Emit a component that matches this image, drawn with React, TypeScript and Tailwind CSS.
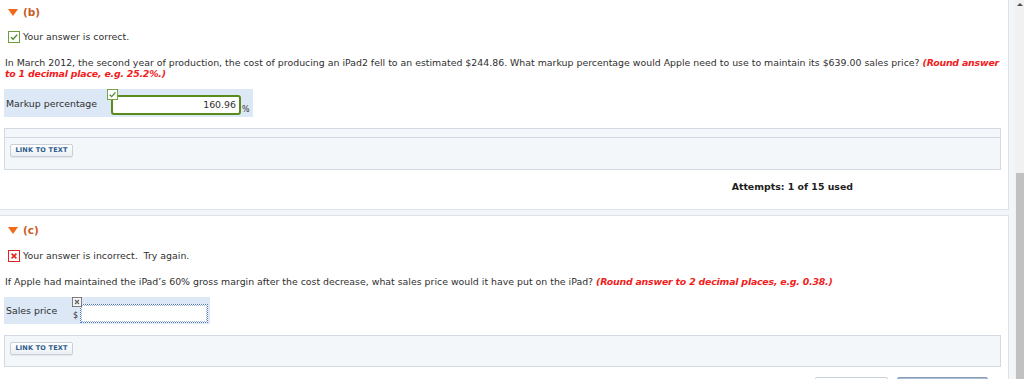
import React from 'react';

const font = { fontFamily: '"DejaVu Sans", Verdana, sans-serif' };

function Triangle() {
  return <span className="inline-block w-0 h-0 border-l-[5px] border-r-[5px] border-t-[7px] border-l-transparent border-r-transparent border-t-[#f06a18]" />;
}

function CheckIcon({ size = 12 }: { size?: number }) {
  return (
    <svg width={size} height={size} viewBox="0 0 12 12">
      <rect x="0.5" y="0.5" width="11" height="11" fill="#fff" stroke="#6f9c3c" />
      <path d="M3 6.2 L5.1 8.3 L9.2 3.6" fill="none" stroke="#4f8a2a" strokeWidth="1.4" />
    </svg>
  );
}

function XIcon({ size = 12, color = '#e0241f', bg = '#fff' }: { size?: number; color?: string; bg?: string }) {
  return (
    <svg width={size} height={size} viewBox="0 0 12 12">
      <rect x="0.5" y="0.5" width="11" height="11" fill={bg} stroke={color} />
      <path d="M3.6 3.6 L8.4 8.4 M8.4 3.6 L3.6 8.4" stroke={color} strokeWidth="1.6" />
    </svg>
  );
}

function LinkButton() {
  return (
    <button className="flex items-center justify-center h-[13px] w-[63px] rounded-[2px] border border-[#c9d0d9] bg-gradient-to-b from-white to-[#eceff3] text-[6.5px] font-bold tracking-[0.2px] text-[#2d5c8e] leading-none shadow-[0_1px_0_#e3e7ec]">
      LINK TO TEXT
    </button>
  );
}

function Header({ label }: { label: string }) {
  return (
    <div className="flex items-center h-[14px] pl-[4px] gap-[5px]">
      <Triangle />
      <span className="text-[10.5px] font-bold text-[#c85d1f] leading-none">{label}</span>
    </div>
  );
}

export default function App() {
  return (
    <div className="w-[1024px] h-[379px] overflow-hidden flex bg-[#f3f6f9] text-[#2f2f2f]" style={font}>
      <div className="w-[1015px] flex flex-col">
        {/* part b */}
        <div className="shrink-0 w-[1009px] h-[210px] bg-white border-r border-b border-[#dde3ea] px-[4px] pt-[5px]">
          <Header label="(b)" />
          <div className="mt-[12px] flex items-center gap-[3px] pl-[4px] h-[12px]">
            <CheckIcon />
            <span className="text-[9.4px] leading-none">Your answer is correct.</span>
          </div>
          <p className="mt-[14px] ml-px text-[9.4px] leading-[11px] whitespace-nowrap">
            In March 2012, the second year of production, the cost of producing an iPad2 fell to an estimated $244.86. What markup percentage would Apple need to use to maintain its $639.00 sales price?{' '}
            <span className="font-bold italic text-[#f21c1c] tracking-[-0.2px]">
              (Round answer
              <br />
              to 1 decimal place, e.g. 25.2%.)
            </span>
          </p>
          <div className="mt-[10px] w-[249px] h-[28px] bg-[#dde8f7] flex">
            <span className="w-[107px] pl-[2px] pt-[9px] text-[9.4px] leading-[11px]">Markup percentage</span>
            <div className="relative pt-[6px]">
              <div className="absolute left-[-4px] top-0">
                <CheckIcon size={11} />
              </div>
              <div className="w-[130px] h-[20px] rounded-[3px] border-2 border-[#5b8b1d] bg-white flex items-center justify-end pr-[3px] text-[9.4px]">
                160.96
              </div>
            </div>
            <span className="self-end pb-[2px] text-[8px] leading-[10px] pl-px">%</span>
          </div>
          <div className="mt-[11px] w-[997px]">
            <div className="h-[10px] border border-[#d3dae4] bg-[#f4f7fa]" />
            <div className="h-[32px] border border-t-0 border-[#d3dae4] bg-[#f4f7fa] pl-[5px] pt-[6px] flex items-start">
              <LinkButton />
            </div>
          </div>
          <div className="mt-[11px] flex justify-end pr-[151px]">
            <span className="text-[9.4px] font-bold leading-[11px] text-[#1e1e1e]">Attempts: 1 of 15 used</span>
          </div>
        </div>

        {/* part c */}
        <div className="shrink-0 mt-[5px] w-[1009px] h-[170px] bg-white border-t border-r border-[#dde3ea] px-[4px] pt-[7px]">
          <Header label="(c)" />
          <div className="mt-[13px] flex items-center gap-[3px] pl-[4px] h-[12px]">
            <XIcon />
            <span className="text-[9.4px] leading-none whitespace-pre">Your answer is incorrect.  Try again.</span>
          </div>
          <p className="mt-[14px] ml-px text-[9.4px] leading-[11px]">
            If Apple had maintained the iPad’s 60% gross margin after the cost decrease, what sales price would it have put on the iPad?{' '}
            <span className="font-bold italic text-[#f21c1c] tracking-[-0.2px]">(Round answer to 2 decimal places, e.g. 0.38.)</span>
          </p>
          <div className="mt-[10px] w-[206px] h-[27px] bg-[#dde8f7] flex">
            <span className="w-[68px] pl-[2px] pt-[8px] text-[9.4px] leading-[11px]">Sales price</span>
            <div className="relative flex">
              <div className="absolute left-0 top-0">
                <XIcon size={10} color="#666" bg="#f6f6f6" />
              </div>
              <span className="self-end pb-[3px] text-[8px] leading-[10px] w-[8px] pl-px">$</span>
              <div className="mt-[7px] w-[128px] h-[19px] border border-dotted border-[#4a74c0] bg-white outline outline-1 outline-dotted outline-[#9db3de] outline-offset-[-2px]" />
            </div>
          </div>
          <div className="mt-[11px] w-[997px] h-[32px] border border-[#d3dae4] bg-[#f4f7fa] pl-[5px] pt-[6px] flex items-start">
            <LinkButton />
          </div>
          <div className="mt-[10px] flex gap-[9px] pl-[811px]">
            <div className="w-[73px] h-[10px] rounded-[2px] border border-[#c9d0d9] bg-white" />
            <div className="w-[91px] h-[10px] rounded-[2px] border border-[#8c9fb8] bg-[#a9bbd2]" />
          </div>
        </div>
      </div>

      {/* scrollbar */}
      <div className="w-[9px] h-full bg-[#f1f1f1] flex flex-col items-center">
        <div className="mt-[3px] w-0 h-0 border-l-[3px] border-r-[3px] border-b-[3px] border-l-transparent border-r-transparent border-b-[#505050]" />
        <div className="mt-[167px] w-[8px] ml-px flex-1 bg-[#c1c1c1]" />
      </div>
    </div>
  );
}
